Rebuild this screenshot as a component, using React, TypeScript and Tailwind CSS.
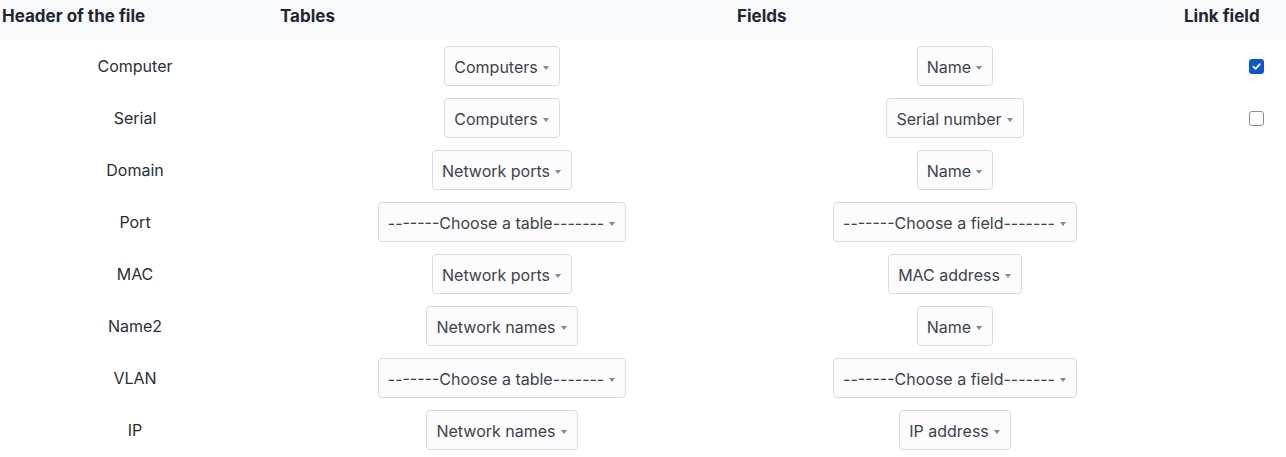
const rows = [
  { label: 'Computer', table: 'Computers', field: 'Name', link: true },
  { label: 'Serial', table: 'Computers', field: 'Serial number', link: false },
  { label: 'Domain', table: 'Network ports', field: 'Name' },
  { label: 'Port', table: '-------Choose a table-------', field: '-------Choose a field-------' },
  { label: 'MAC', table: 'Network ports', field: 'MAC address' },
  { label: 'Name2', table: 'Network names', field: 'Name' },
  { label: 'VLAN', table: '-------Choose a table-------', field: '-------Choose a field-------' },
  { label: 'IP', table: 'Network names', field: 'IP address' },
];

function Select({ value }: { value: string }) {
  return (
    <div className="flex h-10 items-center gap-[5px] rounded border border-[#dcdcdc] bg-[#fcfcfc] pl-[9px] pr-[10px] pt-[1px] text-[16px] text-[#3c4350]">
      <span>{value}</span>
      <span className="mt-[2px] h-0 w-0 border-x-[3.5px] border-t-[4px] border-x-transparent border-t-[#888]" />
    </div>
  );
}

function Checkbox({ checked }: { checked: boolean }) {
  if (checked) {
    return (
      <div className="flex h-[15px] w-[15px] items-center justify-center rounded-[3px] bg-[#0b57d0]">
        <svg viewBox="0 0 12 12" className="h-[11px] w-[11px]">
          <path d="M2.5 6.2 L5 8.6 L9.6 3.4" fill="none" stroke="white" strokeWidth="1.8" strokeLinecap="round" strokeLinejoin="round" />
        </svg>
      </div>
    );
  }
  return <div className="h-[15px] w-[15px] rounded-[3px] border-[1.5px] border-[#8b8b95] bg-white" />;
}

export default function App() {
  return (
    <div className="w-[1286px] bg-white text-[#212529]" style={{ fontFamily: 'Inter, "Noto Sans", sans-serif' }}>
      {/* Header */}
      <div className="grid h-10 grid-cols-[270px_464px_442px_110px] items-center bg-[#f8f9fb] pb-[6px] text-[17px] font-bold text-[#1f2633]">
        <div className="pl-[2px]">Header of the file</div>
        <div className="pl-[10px]">Tables</div>
        <div className="pl-[3px]">Fields</div>
        <div className="pl-[8px]">Link field</div>
      </div>

      {/* Rows */}
      {rows.map((r) => (
        <div key={r.label} className="grid h-[52px] grid-cols-[270px_464px_442px_110px] items-center text-[16px]">
          <div className="text-center text-[#2a2f3a]">{r.label}</div>
          <div className="flex justify-center">
            <Select value={r.table} />
          </div>
          <div className="flex justify-center">
            <Select value={r.field} />
          </div>
          <div className="flex justify-end pr-[22px]">
            {r.link !== undefined && <Checkbox checked={r.link} />}
          </div>
        </div>
      ))}
    </div>
  );
}
